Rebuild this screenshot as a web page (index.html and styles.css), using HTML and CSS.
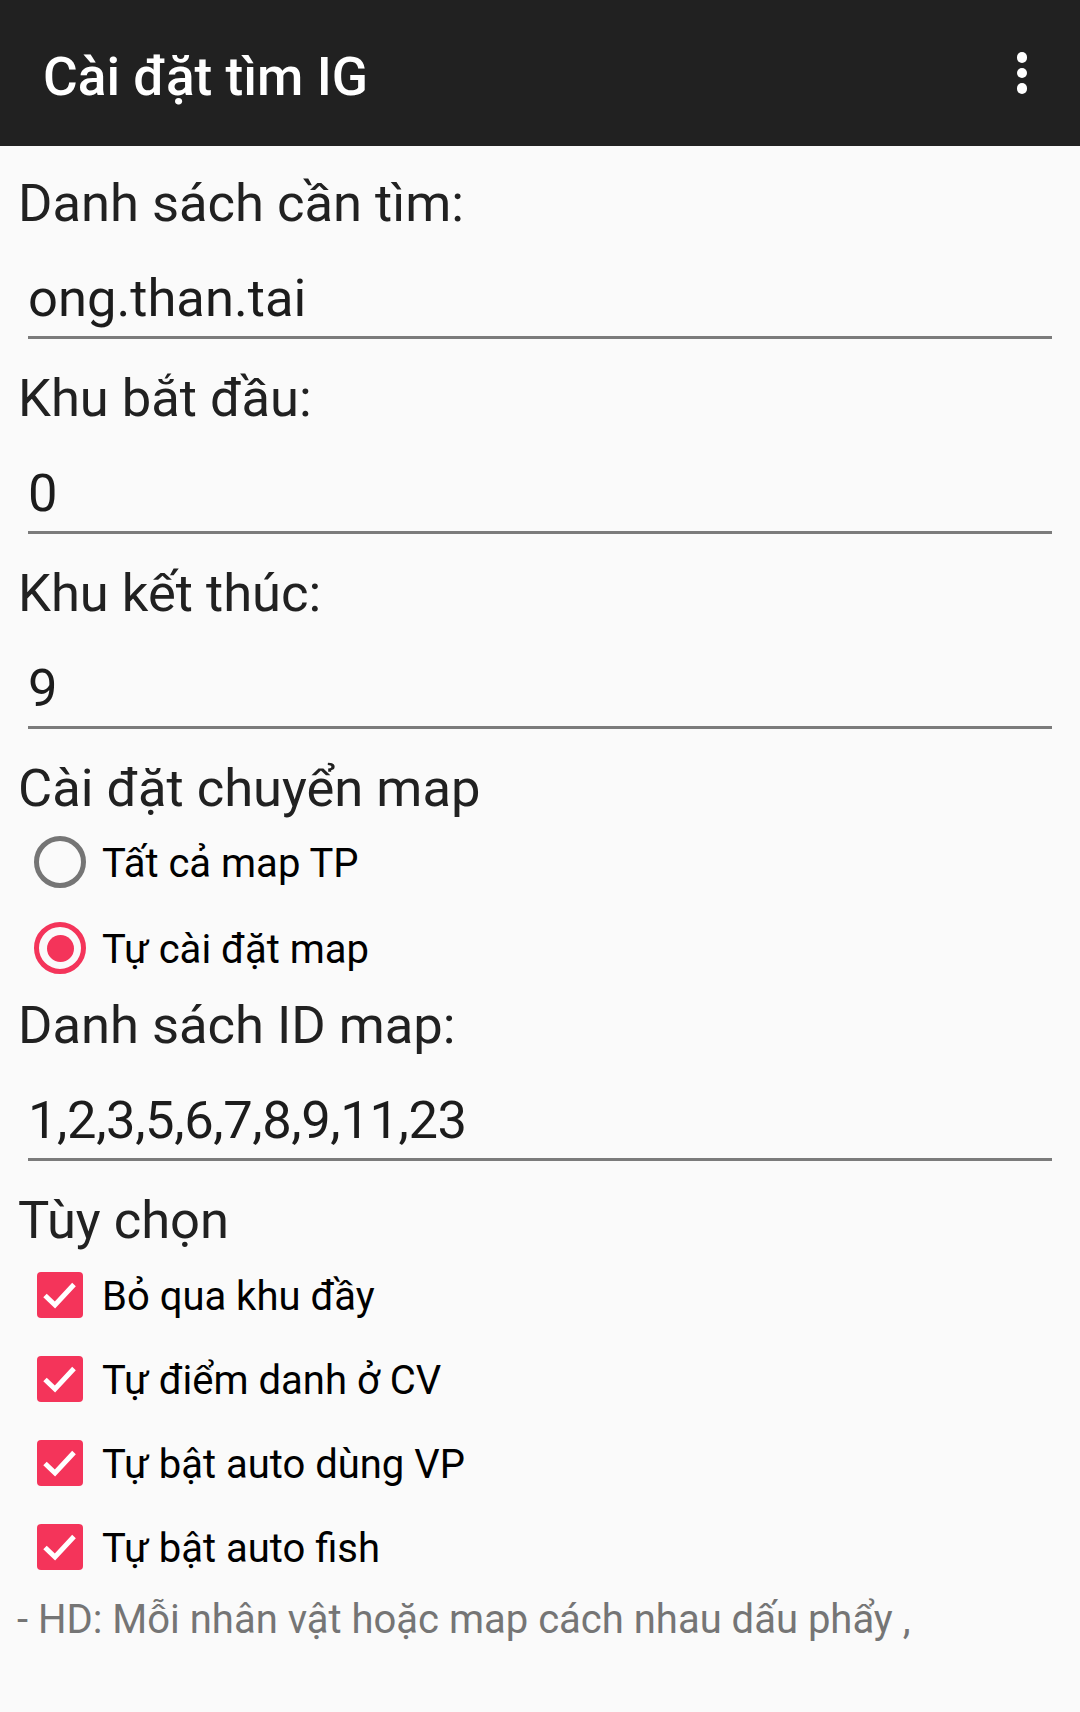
FILE: index.html
```
<!DOCTYPE html>
<html lang="vi">
<head>
<meta charset="utf-8">
<title>Cài đặt tìm IG</title>
<link rel="stylesheet" href="styles.css">
</head>
<body>
<header class="toolbar">
  <div class="title">Cài đặt tìm IG</div>
  <div class="menu"><span class="dot"></span><span class="dot"></span><span class="dot"></span></div>
</header>
<main class="content">
  <div class="label first">Danh sách cần tìm:</div>
  <div class="field">ong.than.tai</div>

  <div class="label">Khu bắt đầu:</div>
  <div class="field">0</div>

  <div class="label">Khu kết thúc:</div>
  <div class="field">9</div>

  <div class="label">Cài đặt chuyển map</div>
  <div class="radio-group">
    <div class="option"><span class="ind"><span class="radio"></span></span><span class="opt-text">Tất cả map TP</span></div>
    <div class="option"><span class="ind"><span class="radio checked"></span></span><span class="opt-text">Tự cài đặt map</span></div>
  </div>

  <div class="label after-radio">Danh sách ID map:</div>
  <div class="field digits">1,2,3,5,6,7,8,9,11,23</div>

  <div class="label">Tùy chọn</div>
  <div class="check-group">
    <div class="option check"><span class="ind"><svg class="cb" viewBox="0 0 46 46"><rect x="0" y="0" width="46" height="46" rx="4" fill="#f4345a"/><path d="M8 23.5 L18 33 L37 12.5" fill="none" stroke="#fff" stroke-width="5"/></svg></span><span class="opt-text">Bỏ qua khu đầy</span></div>
    <div class="option check"><span class="ind"><svg class="cb" viewBox="0 0 46 46"><rect x="0" y="0" width="46" height="46" rx="4" fill="#f4345a"/><path d="M8 23.5 L18 33 L37 12.5" fill="none" stroke="#fff" stroke-width="5"/></svg></span><span class="opt-text">Tự điểm danh ở CV</span></div>
    <div class="option check"><span class="ind"><svg class="cb" viewBox="0 0 46 46"><rect x="0" y="0" width="46" height="46" rx="4" fill="#f4345a"/><path d="M8 23.5 L18 33 L37 12.5" fill="none" stroke="#fff" stroke-width="5"/></svg></span><span class="opt-text">Tự bật auto dùng VP</span></div>
    <div class="option check"><span class="ind"><svg class="cb" viewBox="0 0 46 46"><rect x="0" y="0" width="46" height="46" rx="4" fill="#f4345a"/><path d="M8 23.5 L18 33 L37 12.5" fill="none" stroke="#fff" stroke-width="5"/></svg></span><span class="opt-text">Tự bật auto fish</span></div>
  </div>

  <div class="hint">- HD: Mỗi nhân vật hoặc map cách nhau dấu phẩy ,</div>
</main>
</body>
</html>
```
FILE: styles.css
```
html, body {
  margin: 0;
  padding: 0;
}
body {
  width: 1080px;
  min-height: 1712px;
  background: #fafafa;
  font-family: Roboto, "Noto Sans", "Liberation Sans", sans-serif;
  color: #212121;
}
.toolbar {
  height: 146px;
  background: #212121;
  display: flex;
  align-items: center;
  padding-left: 43px;
  padding-right: 53px;
  box-sizing: border-box;
}
.title {
  color: #ffffff;
  font-size: 53.2px;
  font-weight: 500;
  line-height: 62px;
  padding-top: 8px;
}
.menu {
  margin-left: auto;
  display: flex;
  flex-direction: column;
  gap: 5px;
}
.dot {
  width: 10.5px;
  height: 10.5px;
  border-radius: 50%;
  background: #ffffff;
}
.content {
  padding-left: 18px;
  padding-right: 28px;
}
.label {
  font-size: 52.5px;
  line-height: 62px;
  height: 62px;
  margin-top: 28px;
  color: #212121;
  white-space: nowrap;
}
.label.first {
  margin-top: 26px;
}
.label.after-radio {
  margin-top: 3px;
}
.field {
  margin-top: 33px;
  margin-left: 10px;
  font-size: 52.5px;
  line-height: 62px;
  padding-bottom: 7px;
  border-bottom: 3px solid #7b7b7b;
  color: #1c1c1c;
}
.field.digits {
  letter-spacing: -0.4px;
}
.option {
  display: flex;
  align-items: center;
  height: 86px;
}
.option.check {
  height: 84px;
}
.check-group {
  margin-top: 2px;
}
.ind {
  width: 52px;
  height: 52px;
  margin-left: 16px;
  margin-right: 16px;
  display: flex;
  align-items: center;
  justify-content: center;
  flex: none;
}
.radio {
  width: 52px;
  height: 52px;
  box-sizing: border-box;
  border: 5px solid #757575;
  border-radius: 50%;
  display: flex;
  align-items: center;
  justify-content: center;
}
.radio.checked {
  border-color: #f4345a;
}
.radio.checked::after {
  content: "";
  width: 27px;
  height: 27px;
  border-radius: 50%;
  background: #f4345a;
}
.cb {
  width: 46px;
  height: 46px;
  display: block;
}
.opt-text {
  font-size: 40px;
  line-height: 50px;
  padding-top: 3px;
  color: #000000;
  white-space: nowrap;
}
.hint {
  margin-top: 8px;
  font-size: 40px;
  line-height: 46px;
  color: #757575;
  margin-left: -1px;
  white-space: nowrap;
}
```
